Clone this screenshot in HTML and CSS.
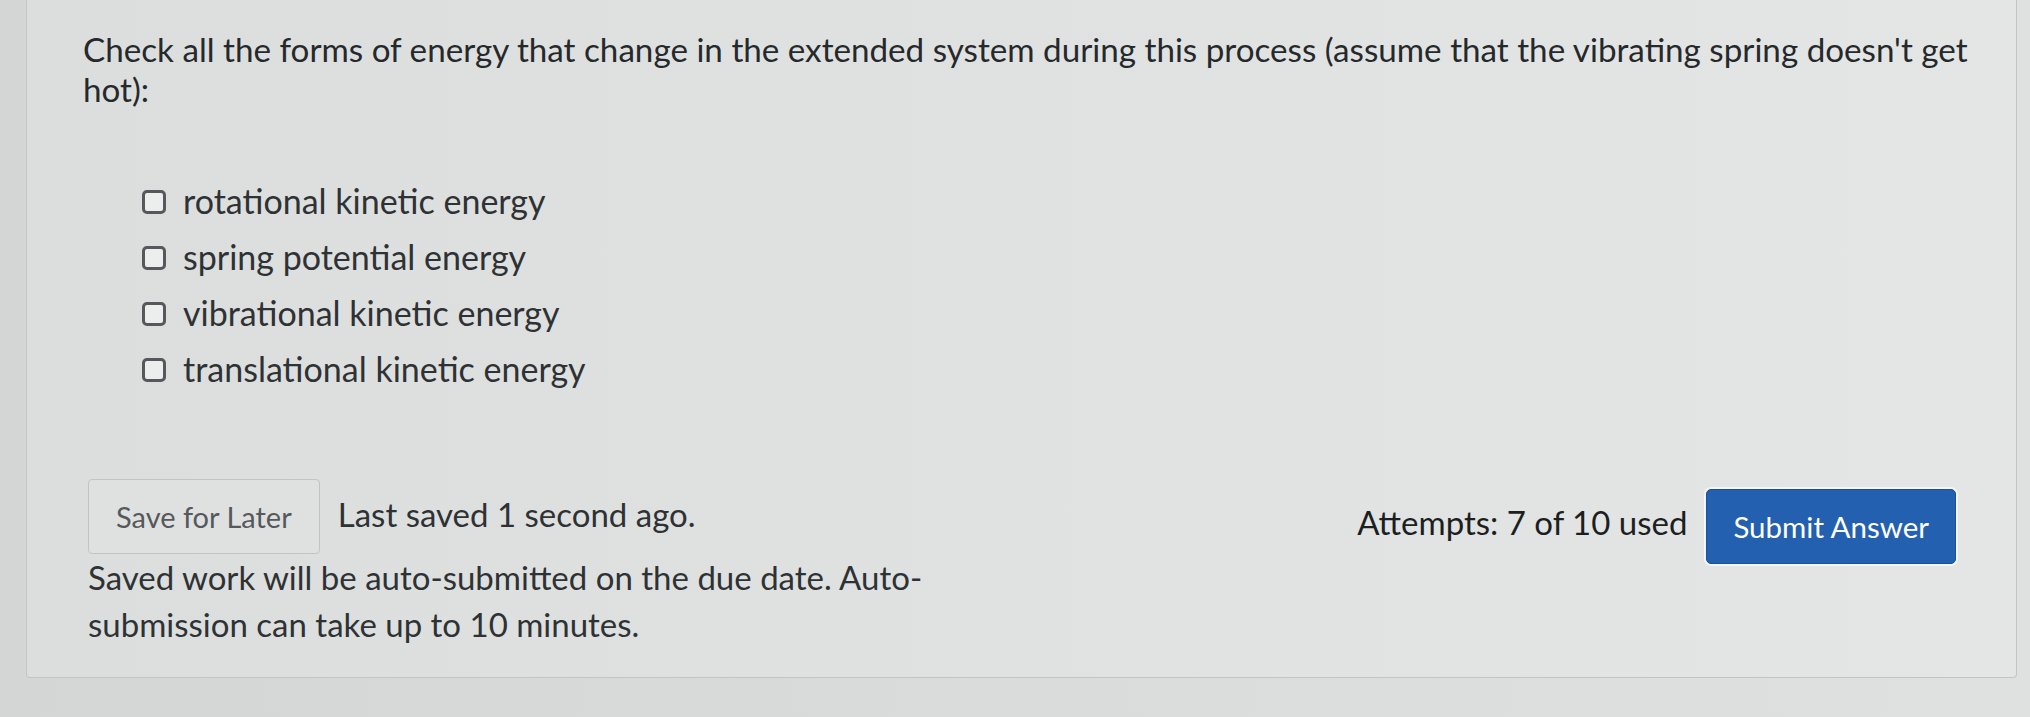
FILE: index.html
```html
<!DOCTYPE html>
<html lang="en">
<head>
<meta charset="utf-8">
<title>Question</title>
<link rel="stylesheet" href="styles.css">
</head>
<body>
<div class="page">
  <div class="card">
    <p class="question">Check all the forms of energy that change in the extended system during this process (assume that the vibrating spring doesn't get hot):</p>
    <ul class="options">
      <li class="option"><span class="box"></span><span class="label">rotational kinetic energy</span></li>
      <li class="option"><span class="box"></span><span class="label">spring potential energy</span></li>
      <li class="option"><span class="box"></span><span class="label">vibrational kinetic energy</span></li>
      <li class="option"><span class="box"></span><span class="label">translational kinetic energy</span></li>
    </ul>
    <div class="footer">
      <div class="save-area">
        <div class="save-row">
          <button class="btn-save" type="button">Save for Later</button>
          <span class="last-saved">Last saved 1 second ago.</span>
        </div>
        <p class="auto-note">Saved work will be auto-submitted on the due date. Auto-submission can take up to 10 minutes.</p>
      </div>
      <div class="submit-area">
        <span class="attempts">Attempts: 7 of 10 used</span>
        <button class="btn-submit" type="button">Submit Answer</button>
      </div>
    </div>
  </div>
</div>
</body>
</html>
```

FILE: styles.css
```css
* { box-sizing: border-box; }

html, body {
  margin: 0;
  padding: 0;
}

body {
  width: 2030px;
  height: 717px;
  overflow: hidden;
  background: linear-gradient(90deg, #d4d6d5 0%, #dadcdb 50%, #dfe1e0 100%);
  font-family: Lato, "Open Sans", "Liberation Sans", sans-serif;
  color: #2a2e31;
}

.page {
  padding: 0 13px 0 26px;
}

.card {
  margin-top: -6px;
  height: 684px;
  background: linear-gradient(90deg, #dcdedd 0%, #e0e2e1 50%, #e4e6e5 100%);
  border: 1px solid #c3c5c4;
  border-top: none;
  border-radius: 0 0 4px 4px;
  padding: 35px 30px 0 56px;
}

.question {
  margin: 0;
  font-size: 33.2px;
  line-height: 40px;
  color: #25292c;
}

.options {
  list-style: none;
  margin: 64px 0 0 0;
  padding: 0 0 0 59px;
}

.option {
  display: flex;
  align-items: center;
  height: 56px;
  gap: 17px;
  font-size: 34px;
  color: #2e3235;
}

.box {
  width: 24px;
  height: 24px;
  border: 3px solid #55595c;
  border-radius: 5px;
  background: #eceeed;
  flex: none;
  margin-top: 2px;
}

.label {
  line-height: 40px;
}

.footer {
  display: flex;
  justify-content: space-between;
  align-items: flex-start;
  margin-top: 82px;
  margin-right: 30px;
}

.save-area {
  width: 870px;
  padding-left: 5px;
}

.save-row {
  display: flex;
  align-items: center;
  gap: 18px;
}

.btn-save {
  font-family: inherit;
  font-size: 29px;
  color: #55595c;
  background: #dfe1e0;
  border: 1.5px solid #c2c4c3;
  border-radius: 4px;
  height: 75px;
  padding: 0 27px;
}

.last-saved {
  font-size: 33px;
  color: #2e3235;
  margin-top: -6px;
}

.auto-note {
  margin: 0;
  font-size: 33px;
  line-height: 47px;
  color: #2e3235;
}

.submit-area {
  display: flex;
  align-items: center;
  gap: 19px;
  margin-top: 10px;
}

.attempts {
  font-size: 33px;
  color: #1b1f22;
  margin-top: -10px;
}

.btn-submit {
  font-family: inherit;
  font-size: 29.5px;
  color: #ffffff;
  background: #2360b0;
  border: 1px solid #1c4f96;
  border-radius: 5px;
  height: 75px;
  padding: 0 26px;
  box-shadow: 0 0 0 2px #f3f5f6;
}
```
